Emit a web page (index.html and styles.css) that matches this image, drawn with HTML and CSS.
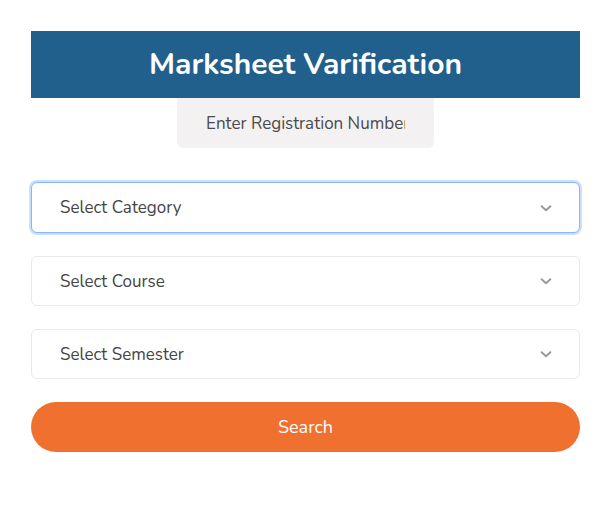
FILE: index.html
```html
<!DOCTYPE html>
<html lang="en">
<head>
<meta charset="utf-8">
<title>Marksheet Varification</title>
<link rel="stylesheet" href="styles.css">
</head>
<body>
<main class="page">
  <h1 class="title">Marksheet Varification</h1>
  <div class="reg-row">
    <input class="reg-input" type="text" placeholder="Enter Registration Number">
  </div>
  <div class="fields">
    <div class="select-wrap focused">
      <span class="select-text">Select Category</span>
      <svg class="chev" viewBox="0 0 16 16" width="14" height="14"><path d="M3 6l5 4.5L13 6" fill="none" stroke="#999999" stroke-width="2.2" stroke-linecap="round" stroke-linejoin="round"/></svg>
    </div>
    <div class="select-wrap">
      <span class="select-text">Select Course</span>
      <svg class="chev" viewBox="0 0 16 16" width="14" height="14"><path d="M3 6l5 4.5L13 6" fill="none" stroke="#999999" stroke-width="2.2" stroke-linecap="round" stroke-linejoin="round"/></svg>
    </div>
    <div class="select-wrap">
      <span class="select-text">Select Semester</span>
      <svg class="chev" viewBox="0 0 16 16" width="14" height="14"><path d="M3 6l5 4.5L13 6" fill="none" stroke="#999999" stroke-width="2.2" stroke-linecap="round" stroke-linejoin="round"/></svg>
    </div>
    <button class="search-btn" type="button">Search</button>
  </div>
</main>
</body>
</html>
```
FILE: styles.css
```css
* { box-sizing: border-box; }
html, body { margin: 0; padding: 0; background: #ffffff; }
body {
  font-family: "Nunito", Lato, "Open Sans", sans-serif;
  color: #444444;
}
.page {
  padding: 31px 34px 0 31px;
  width: 614px;
}
.title {
  margin: 0;
  height: 67px;
  background: #215f8c;
  color: #ffffff;
  font-size: 30px;
  font-weight: 700;
  display: flex;
  align-items: center;
  justify-content: center;
}
.reg-row {
  display: flex;
  justify-content: center;
}
.reg-input {
  width: 257px;
  height: 50px;
  border: none;
  border-radius: 0 0 6px 6px;
  background: #f3f1f2;
  padding: 0 29px;
  font-family: inherit;
  font-size: 17px;
  color: #444;
  outline: none;
}
.reg-input::placeholder { color: #4a4a4a; opacity: 1; }
.fields {
  margin-top: 34px;
  display: flex;
  flex-direction: column;
  gap: 23px;
}
.select-wrap {
  position: relative;
  height: 50px;
  border: 1px solid #e9e9e9;
  border-radius: 6px;
  display: flex;
  align-items: center;
  padding: 0 28px;
  background: #fff;
}
.select-wrap.focused {
  height: 51px;
  border-color: #86b7fe;
  box-shadow: 0 0 0 2px rgba(13, 110, 253, 0.22);
}
.select-text {
  font-size: 17px;
  color: #444444;
}
.chev {
  position: absolute;
  right: 26px;
  top: 50%;
  transform: translateY(-50%);
}
.search-btn {
  height: 50px;
  border: none;
  border-radius: 25px;
  background: #f07030;
  color: #ffffff;
  font-family: inherit;
  font-size: 18px;
  cursor: pointer;
}
```
